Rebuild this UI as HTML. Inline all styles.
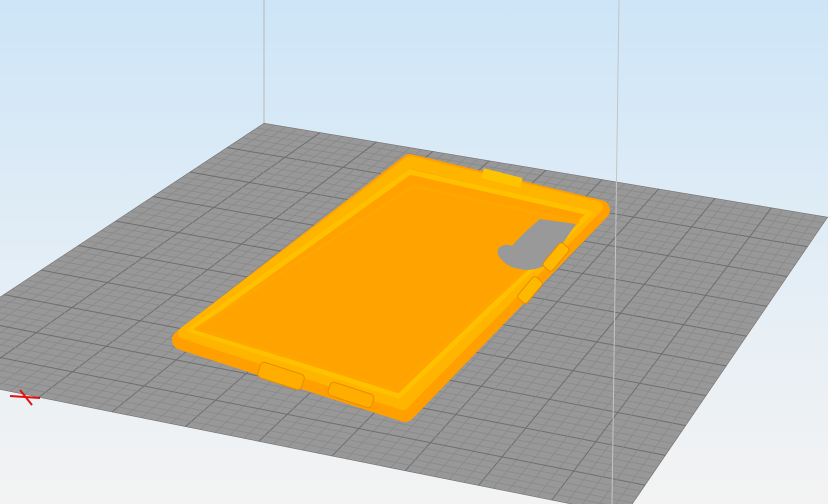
<!DOCTYPE html>
<html><head><meta charset="utf-8"><style>
html,body{margin:0;padding:0;width:828px;height:504px;overflow:hidden}
svg{display:block}
</style></head><body>
<svg id="s" width="828" height="504" viewBox="0 0 828 504" xmlns="http://www.w3.org/2000/svg">
<defs>
<linearGradient id="bg" x1="0" y1="0" x2="0" y2="1">
<stop offset="0" stop-color="#cde5f7"/><stop offset="0.55" stop-color="#e4eef6"/><stop offset="1" stop-color="#f3f3f3"/>
</linearGradient>
<clipPath id="pc"><polygon points="264,123 828,217 625,515 -108,368"/></clipPath>
</defs>
<rect width="828" height="504" fill="url(#bg)"/>
<line x1="264" y1="0" x2="264" y2="123" stroke="#b8b8b8" stroke-width="1"/>
<polygon points="264,123 828,217 625,515 -108,368" fill="#989898"/>
<g id="grid" clip-path="url(#pc)"></g>
<line x1="619" y1="0" x2="612" y2="504" stroke="#c4c4c4" stroke-width="1"/>
<g stroke-linejoin="round">
<polygon points="410,164 600,210 405,412 182,340" fill="#ff9f00" stroke="#ff9f00" stroke-width="20"/>
<polygon points="410,162 597,207 403,404 184,333" fill="#ffaa00" stroke="#ffb400" stroke-width="12"/>
<polygon points="410,172 590,213 399,396 190,330" fill="#ffa200" stroke="#ffc000" stroke-width="5"/>
<polygon points="413,186 578,222 396,390 196,329" fill="#ffa300" stroke="#ffa600" stroke-width="3"/>
</g>
<path d="M540,219 L576,224 L550,262 Q540,270 525,270 Q508,268 502,260 Q494,252 500,247 Q506,243 512,246 Q520,236 540,219 Z" fill="#999999"/>
<rect x="482" y="173" width="40" height="10" fill="#ffc400" transform="rotate(14 502 178)"/>
<rect x="258" y="368" width="46" height="16" rx="4" fill="#ffae00" stroke="#e88c00" transform="rotate(18 281 376)"/>
<rect x="328" y="388" width="46" height="14" rx="4" fill="#ffae00" stroke="#e88c00" transform="rotate(18 351 395)"/>
<rect x="524" y="276" width="12" height="28" rx="3" fill="#ffb800" stroke="#e88c00" transform="rotate(40 530 290)"/>
<rect x="550" y="242" width="12" height="30" rx="3" fill="#ffb800" stroke="#e88c00" transform="rotate(40 556 257)"/>
<line x1="10" y1="396" x2="40" y2="398" stroke="#e01010" stroke-width="2"/>
<line x1="20" y1="390" x2="32" y2="405" stroke="#e01010" stroke-width="2"/>
</svg>
<script>
var g=document.getElementById('grid');
var A=[264,123],B=[828,217],C=[625,515],D=[-108,368];
function L(p,q,t){return [p[0]+(q[0]-p[0])*t,p[1]+(q[1]-p[1])*t];}
var N=50,s='';
for(var i=0;i<=N;i++){var t=i/N;var maj=i%5==0;
var c=maj?'#6e6e6e':'#898989',w=maj?1:0.8;
var p=L(A,B,t),q=L(D,C,t);
s+='<line x1="'+p[0]+'" y1="'+p[1]+'" x2="'+q[0]+'" y2="'+q[1]+'" stroke="'+c+'" stroke-width="'+w+'"/>';
p=L(A,D,t);q=L(B,C,t);
s+='<line x1="'+p[0]+'" y1="'+p[1]+'" x2="'+q[0]+'" y2="'+q[1]+'" stroke="'+c+'" stroke-width="'+w+'"/>';}
g.innerHTML=s;
</script>
</body></html>
